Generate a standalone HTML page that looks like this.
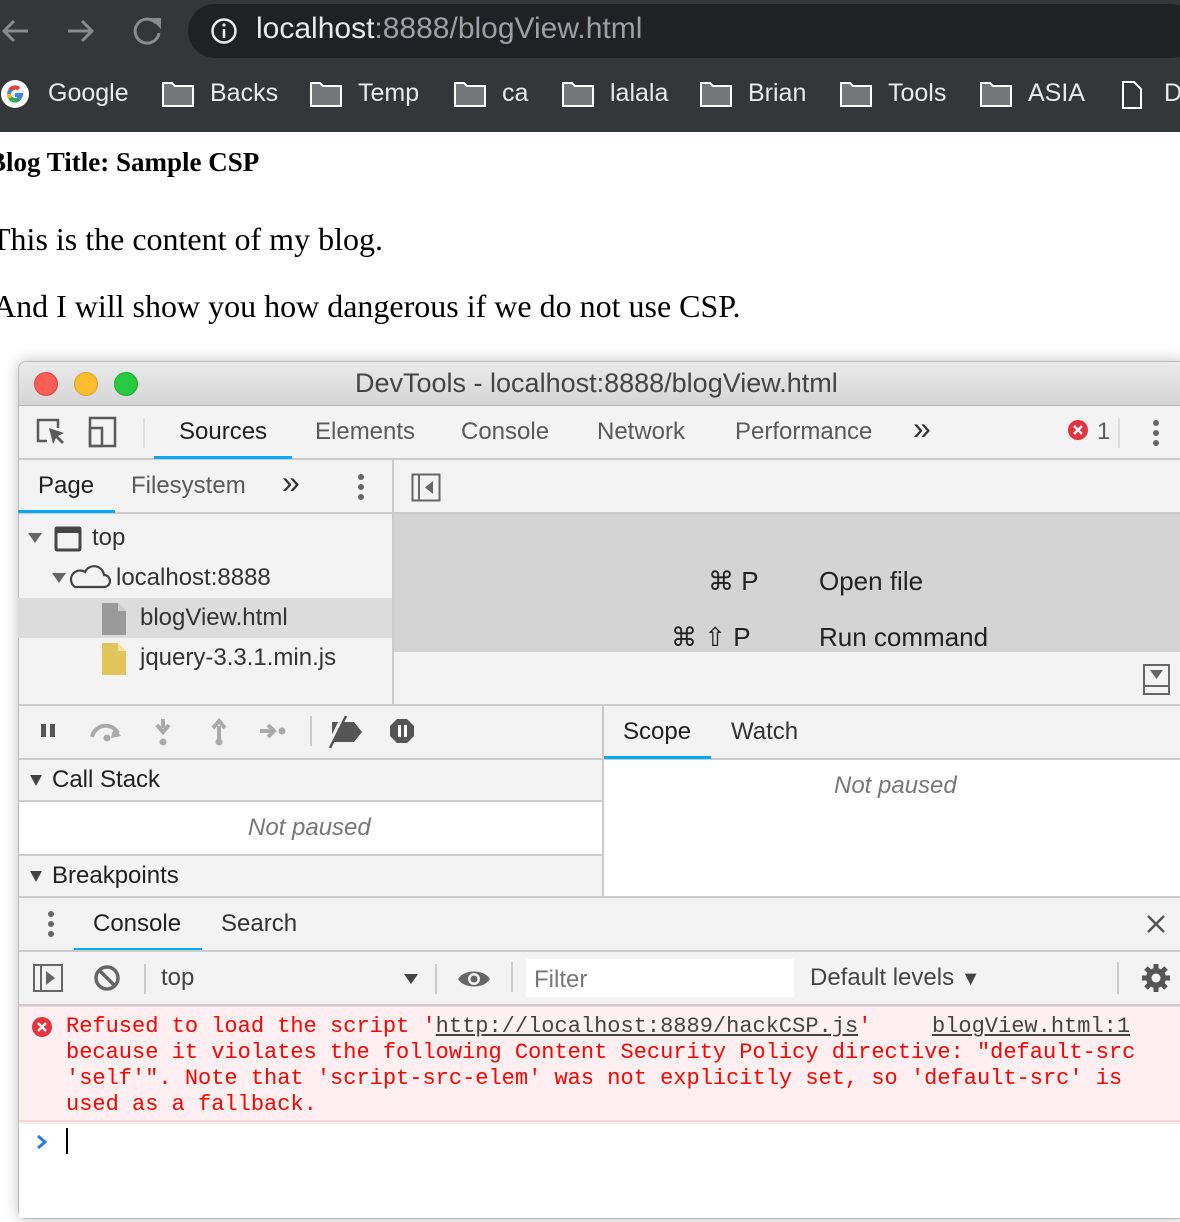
<!DOCTYPE html>
<html><head><meta charset="utf-8"><style>
*{margin:0;padding:0;box-sizing:border-box}
body{width:1180px;height:1222px;overflow:hidden;background:#fff;position:relative;font-family:"Liberation Sans",sans-serif;color:#333}
.a{position:absolute;white-space:nowrap}
.s{font-family:"Liberation Serif",serif;color:#000}
.t{font-size:24px;color:#333}
.g{color:#5a5a5a}
.bk{font-size:25px;color:#e8eaed}
.mono{font-family:"Liberation Mono",monospace;font-size:22px;color:#f00;line-height:26px}
</style></head><body>
<!-- chrome top -->
<div class="a" style="left:0;top:0;width:1180px;height:62px;background:#35363a"></div>
<div class="a" style="left:188px;top:4px;width:1010px;height:54px;background:#202124;border-radius:27px"></div>
<svg class="a" style="left:0;top:14px" width="170" height="34" viewBox="0 0 170 34"><g fill="none" stroke="#8a8b8e" stroke-width="3"><path d="M28 17H4M14 7L4 17l10 10"/><path d="M68 17h24M82 7l10 10-10 10"/><path d="M156 9a12 12 0 1 0 3 10"/></g><path d="M150 4h11v11z" fill="#8a8b8e"/></svg>
<svg class="a" style="left:210px;top:17px" width="28" height="28"><circle cx="14" cy="14" r="11.5" fill="none" stroke="#e8eaed" stroke-width="2.5"/><rect x="12.7" y="12" width="2.6" height="9" fill="#e8eaed"/><circle cx="14" cy="8" r="1.6" fill="#e8eaed"/></svg>
<div class="a" style="left:256px;top:12px;font-size:30px;color:#e8eaed">localhost<span style="color:#9aa0a6">:8888/blogView.html</span></div>
<div class="a" style="left:0;top:62px;width:1180px;height:70px;background:#35363a"></div>
<svg class="a" style="left:0;top:79px" width="30" height="30" viewBox="0 0 30 30"><circle cx="15" cy="15" r="14" fill="#fff"/><path d="M15 9a6 6 0 1 0 6 7h-6" fill="none" stroke="#4285f4" stroke-width="4"/><path d="M10 11a6 6 0 0 1 9-1" fill="none" stroke="#ea4335" stroke-width="4"/><path d="M9 15a6 6 0 0 0 1 4" fill="none" stroke="#fbbc05" stroke-width="4"/><path d="M10 19a6 6 0 0 0 9 1" fill="none" stroke="#34a853" stroke-width="4"/></svg>
<div class="a bk" style="left:48px;top:79px">Google</div>
<svg class="a" style="left:0;top:80px" width="1180" height="30">
<g fill="#75777a" stroke="#fff" stroke-width="2">
<path d="M163 3h9l3 3h18v20h-30z"/><path d="M311 3h9l3 3h18v20h-30z"/><path d="M455 3h9l3 3h18v20h-30z"/><path d="M563 3h9l3 3h18v20h-30z"/><path d="M701 3h9l3 3h18v20h-30z"/><path d="M841 3h9l3 3h18v20h-30z"/><path d="M981 3h9l3 3h18v20h-30z"/></g>
<path d="M1123 2h11l7 7v19h-18z" fill="none" stroke="#fff" stroke-width="2"/></svg>
<div class="a bk" style="left:210px;top:79px">Backs</div>
<div class="a bk" style="left:358px;top:79px">Temp</div>
<div class="a bk" style="left:502px;top:79px">ca</div>
<div class="a bk" style="left:610px;top:79px">lalala</div>
<div class="a bk" style="left:748px;top:79px">Brian</div>
<div class="a bk" style="left:888px;top:79px">Tools</div>
<div class="a bk" style="left:1028px;top:79px">ASIA</div>
<div class="a bk" style="left:1164px;top:79px">D</div>
<!-- page -->
<div class="a s" style="left:-12px;top:147px;font-size:27px;font-weight:bold">Blog Title: Sample CSP</div>
<div class="a s" style="left:-9px;top:221px;font-size:32px">This is the content of my blog.</div>
<div class="a s" style="left:-7px;top:288px;font-size:32px">And I will show you how dangerous if we do not use CSP.</div>
<!-- devtools -->
<div class="a" style="left:18px;top:361px;width:1170px;height:858px;background:#f3f3f3;border:1px solid #bbb;border-radius:8px;box-shadow:0 0 14px rgba(0,0,0,.25);overflow:hidden">
<div class="a" style="left:0;top:0;width:1170px;height:44px;background:linear-gradient(#ebebeb,#d5d5d5);border-bottom:1px solid #b5b5b5"></div>
</div>
<svg class="a" style="left:30px;top:370px" width="110" height="30"><circle cx="16" cy="14" r="11.5" fill="#fd5f57" stroke="#e0443e"/><circle cx="56" cy="14" r="11.5" fill="#febc2e" stroke="#dea123"/><circle cx="96" cy="14" r="11.5" fill="#28c840" stroke="#1aab29"/></svg>
<div class="a" style="left:355px;top:368px;font-size:27px;color:#444">DevTools - localhost:8888/blogView.html</div>
<!-- main tabs -->
<div class="a" style="left:19px;top:458px;width:1161px;height:2px;background:#ccc"></div>
<svg class="a" style="left:34px;top:416px" width="90" height="32" fill="none" stroke="#5a5a5a" stroke-width="2.5"><path d="M13 25H4V4h20v8"/><path d="M15 12l4 16 3-6 6 6 2-2-6-6 6-3z" fill="#5a5a5a" stroke="none"/><rect x="56" y="2" width="25" height="28"/><rect x="56" y="12" width="12" height="18"/></svg>
<div class="a" style="left:143px;top:418px;width:2px;height:30px;background:#ddd"></div>
<div class="a t" style="left:179px;top:418px;color:#222">Sources</div>
<div class="a" style="left:154px;top:456px;width:138px;height:3px;background:#03a9f4"></div>
<div class="a t g" style="left:315px;top:418px">Elements</div>
<div class="a t g" style="left:461px;top:418px">Console</div>
<div class="a t g" style="left:597px;top:418px">Network</div>
<div class="a t g" style="left:735px;top:418px">Performance</div>
<div class="a g" style="left:913px;top:410px;font-size:32px;color:#333">»</div>
<svg class="a" style="left:1067px;top:419px" width="22" height="22"><circle cx="11" cy="11" r="10" fill="#e5343d"/><path d="M7 7l8 8M15 7l-8 8" stroke="#fff" stroke-width="2.4"/></svg>
<div class="a t g" style="left:1097px;top:418px">1</div>
<div class="a" style="left:1118px;top:418px;width:2px;height:30px;background:#ddd"></div>
<svg class="a" style="left:1150px;top:418px" width="12" height="30" fill="#666"><circle cx="6" cy="5" r="3"/><circle cx="6" cy="15" r="3"/><circle cx="6" cy="25" r="3"/></svg>
<!-- navigator -->
<div class="a" style="left:392px;top:460px;width:2px;height:245px;background:#ccc"></div>
<div class="a" style="left:19px;top:512px;width:373px;height:2px;background:#ccc"></div>
<div class="a t" style="left:38px;top:472px;color:#222">Page</div>
<div class="a" style="left:18px;top:510px;width:97px;height:3px;background:#03a9f4"></div>
<div class="a t g" style="left:131px;top:472px">Filesystem</div>
<div class="a g" style="left:282px;top:464px;font-size:32px;color:#333">»</div>
<svg class="a" style="left:355px;top:473px" width="12" height="30" fill="#666"><circle cx="6" cy="4" r="3"/><circle cx="6" cy="14" r="3"/><circle cx="6" cy="24" r="3"/></svg>
<div class="a" style="left:18px;top:598px;width:374px;height:40px;background:#dcdcdc"></div>
<svg class="a" style="left:25px;top:525px" width="350" height="150">
<path d="M3 8h14l-7 10z" fill="#666"/><rect x="31" y="3" width="24" height="22" rx="1" fill="none" stroke="#444" stroke-width="3"/><rect x="31" y="3" width="24" height="5" fill="#444"/>
<path d="M27 48h14l-7 10z" fill="#666"/><path d="M50 62h29a6 6 0 0 0 0-12 10 10 0 0 0-19-3 8 8 0 0 0-10 15z" fill="none" stroke="#444" stroke-width="2.2"/>
<path d="M77 78h16l8 8v24H77z" fill="#9a9a9a"/><path d="M93 78v8h8" fill="#ccc"/>
<path d="M77 118h16l8 8v24H77z" fill="#e0c55a"/><path d="M93 118v8h8" fill="#f4e4a0"/>
</svg>
<div class="a t" style="left:92px;top:524px;color:#333">top</div>
<div class="a t" style="left:116px;top:564px;color:#333">localhost:8888</div>
<div class="a t" style="left:140px;top:604px;color:#333">blogView.html</div>
<div class="a t" style="left:140px;top:644px;color:#333">jquery-3.3.1.min.js</div>
<!-- editor -->
<svg class="a" style="left:411px;top:473px" width="32" height="30"><rect x="1.5" y="1.5" width="27" height="26" fill="none" stroke="#666" stroke-width="2"/><path d="M8 2v26" stroke="#666" stroke-width="2"/><path d="M22 8v13l-8-6.5z" fill="#666"/></svg>
<div class="a" style="left:394px;top:512px;width:786px;height:2px;background:#ccc"></div>
<div class="a" style="left:394px;top:514px;width:786px;height:138px;background:#d4d4d4"></div>
<div class="a" style="left:708px;top:566px;font-size:26px;color:#222">⌘ P</div>
<div class="a" style="left:819px;top:566px;font-size:26px;color:#222">Open file</div>
<div class="a" style="left:671px;top:622px;font-size:26px;color:#222;height:30px;overflow:hidden">⌘ ⇧ P</div>
<div class="a" style="left:819px;top:622px;font-size:26px;color:#222;height:30px;overflow:hidden">Run command</div>
<svg class="a" style="left:1143px;top:664px" width="28" height="32"><rect x="1" y="1" width="25" height="29" fill="none" stroke="#666" stroke-width="2"/><path d="M1 22h25" stroke="#666" stroke-width="2"/><path d="M7 6h13l-6.5 9z" fill="#666"/></svg>
<!-- debugger -->
<div class="a" style="left:19px;top:704px;width:1161px;height:2px;background:#ccc"></div>
<div class="a" style="left:602px;top:706px;width:2px;height:191px;background:#ccc"></div>
<svg class="a" style="left:36px;top:713px" width="400" height="40">
<rect x="5" y="11" width="5" height="13" fill="#555"/><rect x="14" y="11" width="5" height="13" fill="#555"/>
<path d="M56 24a14 14 0 0 1 26-4" fill="none" stroke="#aaa" stroke-width="4"/><path d="M78 14l7 9-10 2z" fill="#aaa"/><circle cx="71" cy="25" r="3.5" fill="#aaa"/>
<path d="M127 6v9M121 12l6 7 6-7" stroke="#aaa" stroke-width="4" fill="none"/><circle cx="127" cy="29" r="3.5" fill="#aaa"/>
<path d="M183 28v-15M177 15l6-7 6 7" stroke="#aaa" stroke-width="4" fill="none"/><circle cx="183" cy="29" r="3.5" fill="#aaa"/>
<path d="M224 18h12M232 12l6 6-6 6" stroke="#aaa" stroke-width="4" fill="none"/><circle cx="246" cy="18" r="3.5" fill="#aaa"/>
<rect x="274" y="3" width="2" height="30" fill="#ccc"/>
<path d="M296 9h22l8 10-8 10h-22z" fill="#555"/><path d="M292 35l16-32" stroke="#f3f3f3" stroke-width="5"/><path d="M294 35l16-32" stroke="#555" stroke-width="2.5"/>
<path d="M361 6h10l7 7v10l-7 7h-10l-7-7v-10z" fill="#555"/><rect x="362" y="12" width="3" height="12" fill="#fff"/><rect x="368" y="12" width="3" height="12" fill="#fff"/>
</svg>
<div class="a" style="left:19px;top:758px;width:583px;height:2px;background:#ccc"></div>
<svg class="a" style="left:28px;top:772px" width="16" height="120" fill="#444"><path d="M2 3h12l-6 11z"/><path d="M2 99h12l-6 11z"/></svg>
<div class="a t" style="left:52px;top:766px;color:#222">Call Stack</div>
<div class="a" style="left:19px;top:800px;width:583px;height:2px;background:#ccc"></div>
<div class="a" style="left:19px;top:802px;width:583px;height:52px;background:#fff"></div>
<div class="a t" style="left:248px;top:814px;color:#777;font-style:italic">Not paused</div>
<div class="a" style="left:19px;top:854px;width:583px;height:2px;background:#ccc"></div>
<div class="a t" style="left:52px;top:862px;color:#222">Breakpoints</div>
<div class="a t" style="left:623px;top:718px;color:#222">Scope</div>
<div class="a t" style="left:731px;top:718px;color:#333">Watch</div>
<div class="a" style="left:604px;top:758px;width:576px;height:2px;background:#ccc"></div>
<div class="a" style="left:604px;top:756px;width:107px;height:3px;background:#03a9f4"></div>
<div class="a" style="left:604px;top:760px;width:576px;height:136px;background:#fff"></div>
<div class="a t" style="left:834px;top:772px;color:#777;font-style:italic">Not paused</div>
<!-- drawer -->
<div class="a" style="left:19px;top:896px;width:1161px;height:2px;background:#ccc"></div>
<svg class="a" style="left:45px;top:910px" width="12" height="30" fill="#666"><circle cx="6" cy="4" r="3"/><circle cx="6" cy="14" r="3"/><circle cx="6" cy="24" r="3"/></svg>
<div class="a t" style="left:93px;top:910px;color:#222">Console</div>
<div class="a" style="left:74px;top:948px;width:128px;height:3px;background:#03a9f4"></div>
<div class="a t" style="left:221px;top:910px;color:#333">Search</div>
<svg class="a" style="left:1146px;top:914px" width="20" height="20"><path d="M2 2l16 16M18 2L2 18" stroke="#555" stroke-width="2.6"/></svg>
<div class="a" style="left:19px;top:950px;width:1161px;height:2px;background:#ccc"></div>
<svg class="a" style="left:32px;top:962px" width="420" height="34">
<rect x="2" y="3" width="28" height="26" fill="none" stroke="#666" stroke-width="2"/><path d="M9 3v26" stroke="#666" stroke-width="2"/><path d="M14 9l9 7-9 7z" fill="#666"/>
<circle cx="75" cy="16" r="11" fill="none" stroke="#666" stroke-width="3.5"/><path d="M67 8l16 16" stroke="#666" stroke-width="3.5"/>
<rect x="112" y="2" width="2" height="30" fill="#ccc"/>
<path d="M372 12h14l-7 10z" fill="#444"/>
<rect x="403" y="2" width="2" height="30" fill="#ccc"/>
</svg>
<div class="a t" style="left:161px;top:964px;color:#444">top</div>
<svg class="a" style="left:456px;top:966px" width="36" height="26"><path d="M2 13C8 3 28 3 34 13 28 23 8 23 2 13z" fill="#666"/><circle cx="18" cy="13" r="6" fill="#f3f3f3"/><circle cx="18" cy="13" r="3.5" fill="#666"/></svg>
<div class="a" style="left:511px;top:962px;width:2px;height:30px;background:#ccc"></div>
<div class="a" style="left:526px;top:959px;width:268px;height:38px;background:#fff"></div>
<div class="a t" style="left:534px;top:966px;color:#777">Filter</div>
<div class="a t" style="left:810px;top:964px;color:#444">Default levels <span style="font-size:20px">▼</span></div>
<div class="a" style="left:1117px;top:962px;width:2px;height:32px;background:#ccc"></div>
<svg class="a" style="left:1141px;top:963px" width="30" height="30" viewBox="0 0 30 30"><g fill="#555"><circle cx="15" cy="15" r="10"/><g stroke="#555" stroke-width="5"><path d="M15 1v28M1 15h28M5 5l20 20M25 5L5 25"/></g></g><circle cx="15" cy="15" r="4.5" fill="#f3f3f3"/></svg>
<div class="a" style="left:19px;top:1004px;width:1161px;height:2px;background:#ccc"></div>
<!-- error -->
<div class="a" style="left:19px;top:1006px;width:1161px;height:116px;background:#fef0f0;border-top:1px solid #f9d6d6;border-bottom:2px solid #f9d6d6"></div>
<svg class="a" style="left:31px;top:1016px" width="22" height="22"><circle cx="11" cy="11" r="10" fill="#e5343d"/><path d="M7 7l8 8M15 7l-8 8" stroke="#fff" stroke-width="2.4"/></svg>
<div class="a mono" style="left:66px;top:1014px">Refused to load the script '<span style="color:#444;text-decoration:underline">http://localhost:8889/hackCSP.js</span>'</div>
<div class="a mono" style="left:932px;top:1014px;color:#444;text-decoration:underline">blogView.html:1</div>
<div class="a mono" style="left:66px;top:1040px">because it violates the following Content Security Policy directive: "default-src</div>
<div class="a mono" style="left:66px;top:1066px">'self'". Note that 'script-src-elem' was not explicitly set, so 'default-src' is</div>
<div class="a mono" style="left:66px;top:1092px">used as a fallback.</div>
<div class="a" style="left:19px;top:1124px;width:1161px;height:94px;background:#fff"></div>
<svg class="a" style="left:35px;top:1133px" width="14" height="18"><path d="M3 3l7 6-7 6" fill="none" stroke="#2a7de1" stroke-width="3"/></svg>
<div class="a" style="left:66px;top:1128px;width:2px;height:26px;background:#000"></div>
</body></html>
